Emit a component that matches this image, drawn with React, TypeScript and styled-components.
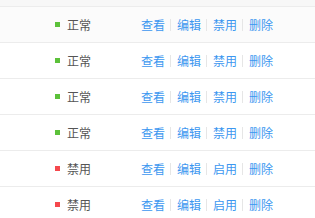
import React from 'react';
import styled, { createGlobalStyle } from 'styled-components';

const GlobalStyle = createGlobalStyle`
  html, body {
    margin: 0;
    padding: 0;
    background: #fff;
    font-family: "Noto Sans CJK SC", "Noto Sans", sans-serif;
    font-size: 12px;
  }
`;

const Table = styled.div`
  width: 315px;
  overflow: hidden;
`;

const Row = styled.div<{ hover?: boolean; cut?: boolean }>`
  display: grid;
  grid-template-columns: 55px 86px 1fr;
  align-items: center;
  height: ${(p) => (p.cut ? '6px' : '35px')};
  background: ${(p) => (p.cut ? '#f7f7f7' : p.hover ? '#fbfbfb' : '#fff')};
  border-bottom: 1px solid #ececec;
`;

const Status = styled.div`
  display: flex;
  align-items: center;
  gap: 7px;
  color: #555;
`;

const Dot = styled.span<{ color: string }>`
  width: 5px;
  height: 5px;
  background: ${(p) => p.color};
`;

const Actions = styled.div`
  display: flex;
  align-items: center;
`;

const Link = styled.a`
  color: #3c97f0;
  cursor: pointer;
  line-height: 1;
`;

const Sep = styled.span`
  width: 1px;
  height: 12px;
  margin: 0 6px 0 5px;
  background: #e6e6e6;
`;

const rows = [
  { on: true },
  { on: true },
  { on: true },
  { on: true },
  { on: false },
  { on: false },
];

export default function App() {
  return (
    <>
      <GlobalStyle />
      <Table>
        <Row cut />
        {rows.map((r, i) => (
          <Row key={i} hover={i === 0}>
            <div />
            <Status>
              <Dot color={r.on ? '#5cc13a' : '#f5484d'} />
              {r.on ? '正常' : '禁用'}
            </Status>
            <Actions>
              <Link>查看</Link>
              <Sep />
              <Link>编辑</Link>
              <Sep />
              <Link>{r.on ? '禁用' : '启用'}</Link>
              <Sep />
              <Link>删除</Link>
            </Actions>
          </Row>
        ))}
      </Table>
    </>
  );
}
